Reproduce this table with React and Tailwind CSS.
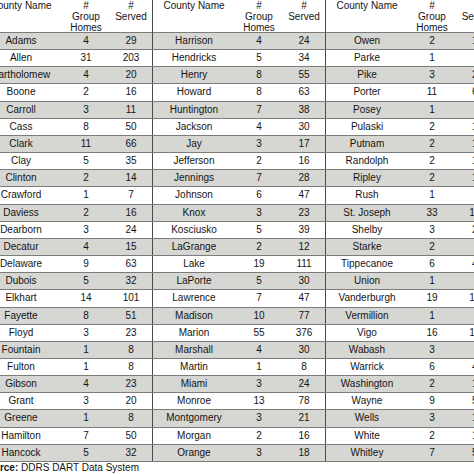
import React from 'react'

const groups = [
  [
    ['Adams', 4, 29], ['Allen', 31, 203], ['Bartholomew', 4, 20], ['Boone', 2, 16],
    ['Carroll', 3, 11], ['Cass', 8, 50], ['Clark', 11, 66], ['Clay', 5, 35],
    ['Clinton', 2, 14], ['Crawford', 1, 7], ['Daviess', 2, 16], ['Dearborn', 3, 24],
    ['Decatur', 4, 15], ['Delaware', 9, 63], ['Dubois', 5, 32], ['Elkhart', 14, 101],
    ['Fayette', 8, 51], ['Floyd', 3, 23], ['Fountain', 1, 8], ['Fulton', 1, 8],
    ['Gibson', 4, 23], ['Grant', 3, 20], ['Greene', 1, 8], ['Hamilton', 7, 50],
    ['Hancock', 5, 32],
  ],
  [
    ['Harrison', 4, 24], ['Hendricks', 5, 34], ['Henry', 8, 55], ['Howard', 8, 63],
    ['Huntington', 7, 38], ['Jackson', 4, 30], ['Jay', 3, 17], ['Jefferson', 2, 16],
    ['Jennings', 7, 28], ['Johnson', 6, 47], ['Knox', 3, 23], ['Kosciusko', 5, 39],
    ['LaGrange', 2, 12], ['Lake', 19, 111], ['LaPorte', 5, 30], ['Lawrence', 7, 47],
    ['Madison', 10, 77], ['Marion', 55, 376], ['Marshall', 4, 30], ['Martin', 1, 8],
    ['Miami', 3, 24], ['Monroe', 13, 78], ['Montgomery', 3, 21], ['Morgan', 2, 16],
    ['Orange', 3, 18],
  ],
  [
    ['Owen', 2, 12], ['Parke', 1, 7], ['Pike', 3, 22], ['Porter', 11, 64],
    ['Posey', 1, 8], ['Pulaski', 2, 12], ['Putnam', 2, 14], ['Randolph', 2, 13],
    ['Ripley', 2, 12], ['Rush', 1, 6], ['St. Joseph', 33, 198], ['Shelby', 3, 22],
    ['Starke', 2, 9], ['Tippecanoe', 6, 42], ['Union', 1, 5], ['Vanderburgh', 19, 120],
    ['Vermillion', 1, 7], ['Vigo', 16, 104], ['Wabash', 3, 9], ['Warrick', 6, 41],
    ['Washington', 2, 14], ['Wayne', 9, 54], ['Wells', 3, 18], ['White', 2, 15],
    ['Whitley', 7, 52],
  ],
]

const cols = 'grid grid-cols-[82px_48px_43px_82px_48px_43px_82px_48px_43px]'

const App = () => {
  return (
    <div className="w-[474px] h-[474px] overflow-hidden bg-white text-[10px] text-[#141414] font-['Liberation_Sans',Arial,sans-serif]">
      <div className="w-[519px] -ml-[20px]">
        <div className={`${cols} h-[33px] border-b border-[#7c7c7c] leading-[11px] text-center`}>
          {groups.map((g, i) => (
            <React.Fragment key={i}>
              <div className="-mt-[0.5px]">County Name</div>
              <div className="-mt-[0.5px]">#<br />Group<br />Homes</div>
              <div className={`-mt-[0.5px] ${i < 2 ? 'border-r-[1.5px] border-[#4a4a4a]' : ''}`}>#<br />Served</div>
            </React.Fragment>
          ))}
        </div>
        {groups[0].map((_, r) => (
          <div
            key={r}
            className={`${cols} h-[17.16px] border-b border-[#7c7c7c] text-center leading-[16px] ${r % 2 === 0 ? 'bg-[#d6d6d2]' : 'bg-white'}`}
          >
            {groups.map((g, i) => (
              <React.Fragment key={i}>
                <div>{g[r][0]}</div>
                <div>{g[r][1]}</div>
                <div className={i < 2 ? 'border-r-[1.5px] border-[#4a4a4a]' : ''}>{g[r][2]}</div>
              </React.Fragment>
            ))}
          </div>
        ))}
      </div>
      <div className="-ml-[19px] leading-[12px] whitespace-nowrap">
        <span className="font-bold">Source:</span> DDRS DART Data System
      </div>
    </div>
  )
}

export default App
